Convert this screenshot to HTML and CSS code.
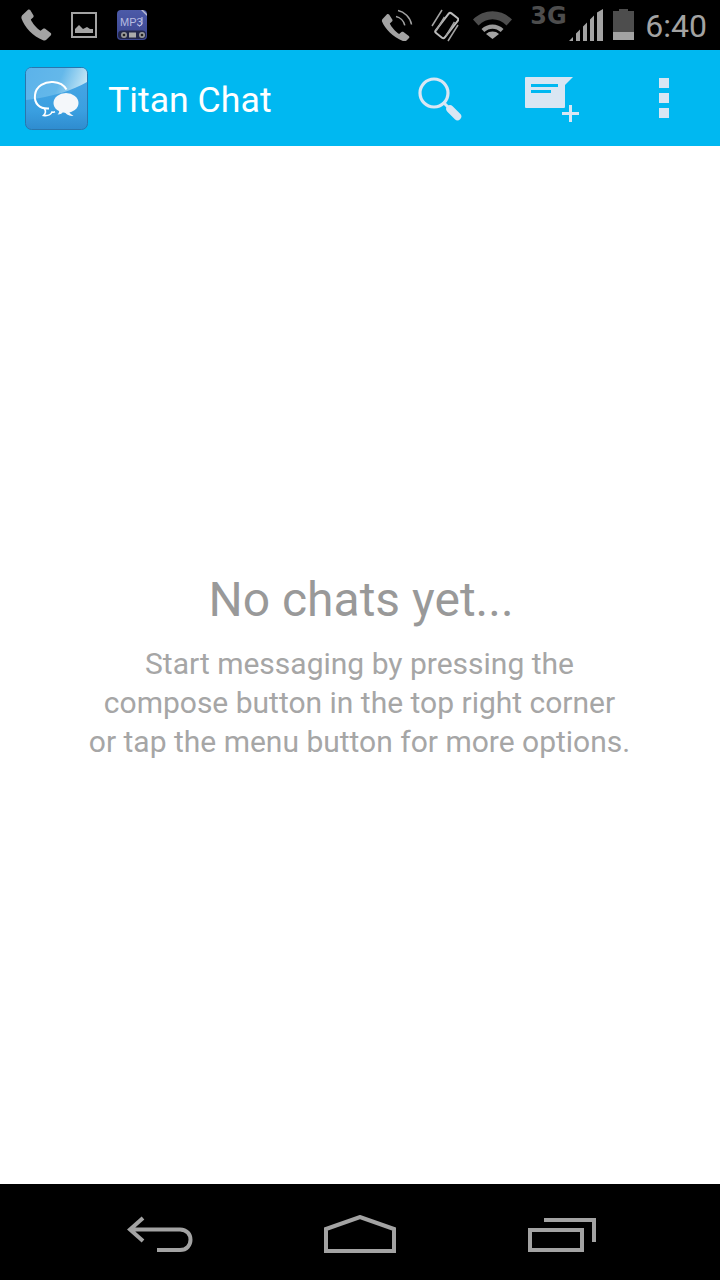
FILE: index.html
```html
<!DOCTYPE html>
<html lang="en">
<head>
<meta charset="utf-8">
<title>Titan Chat</title>
<link rel="stylesheet" href="styles.css">
</head>
<body>
<div class="screen">
  <header class="status">
    <div class="status-left">
      <svg class="ic-phone" viewBox="0 0 32 32"><path class="s-gray" d="M3 5.500 8 .8c.8-.6 1.600-.5 2.200.3l3.200 5.200c.4.800.3 1.500-.3 2.100l-2.300 2.200c1.400 3.500 5.800 8.700 9.800 11.200l2.500-2c.7-.5 1.400-.5 2.100 0l5.500 4.300c.7.600.7 1.400.2 2.100l-4.300 4.400c-1 1-2.200 1.200-3.500.7C13 27.500 4.500 18 1.500 9.500 1.100 7.800 1.800 6.500 3 5.500Z"/></svg>
      <svg class="ic-pic" viewBox="0 0 26 26"><rect class="s-line" x="1" y="1" width="24" height="24"/><path class="s-gray" d="M4 21v-4l4-4 4 4 4-2 3 2 3 0v4Z"/></svg>
      <svg class="ic-mp3" viewBox="0 0 30 30">
        <defs><linearGradient id="mp3g" x1="0" y1="0" x2="0" y2="1"><stop offset="0" stop-color="#4c5aa8"/><stop offset="1" stop-color="#3b4690"/></linearGradient></defs>
        <rect width="30" height="30" rx="4" fill="url(#mp3g)"/>
        <path d="M24 0h2l4 4v2Z" fill="#b9bcd0"/>
        <text class="mp3-text" x="3" y="16">MP3</text>
        <path d="M25 7v7l-3 2.500" fill="none" stroke="#c3c8e4" stroke-width="1"/>
        <rect x="1" y="20.500" width="28" height="8.500" rx="4" fill="#23274a"/>
        <circle cx="7" cy="25" r="3" fill="#9a9a9a"/><circle cx="25" cy="25" r="3" fill="#9a9a9a"/>
        <circle cx="7" cy="25" r="1.300" fill="#222"/><circle cx="25" cy="25" r="1.300" fill="#222"/>
        <rect x="12" y="22.500" width="7" height="5" fill="#aaa"/>
      </svg>
    </div>
    <div class="status-right">
      <svg class="ic-callon" viewBox="0 0 32 32">
        <path class="s-gray" d="M2 9.500 6 5.300c.8-.6 1.500-.5 2.100.3l3.200 5c.4.800.3 1.400-.3 2l-2.200 2c1.400 3.200 5.500 8 9.300 10.500l2.400-2c.7-.5 1.400-.5 2 0l5.300 4c.7.600.7 1.300.2 2l-2.400 2.300c-1 1-2.200 1.200-3.500.7C12 28 4 20 1 12.500c-.3-1.100 0-2.200 1-3Z"/>
        <path class="s-arc" d="M15 7.500c4 .8 7.800 4.300 8.800 8.800"/><path class="s-arc" d="M17 1.500c6 1 12.500 7 13.500 14"/>
      </svg>
      <svg class="ic-vib" viewBox="0 0 28 33">
        <rect class="s-line2" x="10" y="4" width="11.500" height="25" rx="2" transform="rotate(38 15.700 16.500)"/>
        <path class="s-arc" d="M1 17 11 1M5 22 13.500 8M17 32l10-16M15 27l8.500-14" />
      </svg>
      <svg class="ic-wifi" viewBox="0 0 39 30">
        <path fill="#4d4d4d" d="M0 10.500C11-.5 28-.5 39 10.500l-5.500 6C25.500 8 13.500 8 5.500 16.500Z"/>
        <path fill="#9a9a9a" d="M8.500 20C14.500 14 24.500 14 30.500 20l-2.800 3C23 18.500 16 18.500 11.300 23Z"/>
        <path class="s-gray" d="M13 25c3.500-3.300 9.500-3.300 13 0l-6.500 5Z"/>
      </svg>
      <div class="net">3G</div>
      <svg class="ic-signal" viewBox="0 0 34 32">
        <path class="s-gray" d="M0 32 4 28V32ZM7 32V24.500L11 20.500V32ZM14 32V17.500L18 13.500V32ZM21 32V10.500L25 6.500V32ZM28 32V3.500L34 0V32Z"/>
      </svg>
      <svg class="ic-batt" viewBox="0 0 21 31">
        <path fill="#4d4d4d" d="M6 0h9v2h6v21H0V2h6Z"/>
        <rect class="s-gray" y="23" width="21" height="8"/>
      </svg>
      <span class="time">6:40</span>
    </div>
  </header>

  <div class="appbar">
    <svg class="logo" viewBox="0 0 63 63">
      <defs>
        <linearGradient id="lg" x1="0" y1="0" x2="0" y2="1"><stop offset="0" stop-color="#4aa8e6"/><stop offset=".7" stop-color="#3a9fe0"/><stop offset="1" stop-color="#2f8ccf"/></linearGradient>
        <linearGradient id="gl" x1="0" y1="0.300" x2="1" y2="0.500"><stop offset="0" stop-color="#5cb3ea"/><stop offset=".55" stop-color="#64b8ea"/><stop offset="1" stop-color="#c9e9f6"/></linearGradient>
      </defs>
      <rect x=".5" y=".5" width="62" height="62" rx="6" fill="url(#lg)" stroke="#2a76ad"/>
      <path d="M1 6a5 5 0 0 1 5-5h51a5 5 0 0 1 5 5v9C48 23 28 30 1 33Z" fill="url(#gl)"/>
      <path d="M24 41.500C14 42 9 36 10 28 11 19 20 14.500 28 15c6 .4 11 3 13.500 7.500" fill="none" stroke="#fff" stroke-width="2"/>
      <path d="M19.500 42c1.500 2 1.500 4-1 6.500 3.500.5 7-.3 8.500-3.500 1 .3 2.200.2 3-.2" fill="none" stroke="#fff" stroke-width="1.600"/>
      <ellipse cx="41" cy="36" rx="12.500" ry="10" fill="#f4f7fa"/>
      <path d="M34 43c.5 1.500 0 3-1.500 4.500 3 0 5-1 6-3.500ZM44 44c.5 2 2 3.500 4.500 5-4 0-7-1-9-4.500Z" fill="#f4f7fa"/>
    </svg>
    <h1 class="title">Titan Chat</h1>
    <div class="actions">
      <div class="action">
        <svg class="ic-search" viewBox="0 0 44 45">
          <circle cx="16" cy="16" r="14" fill="none" stroke="#d9e6f3" stroke-width="3.200"/>
          <path d="M32 32 39.500 39.500" fill="none" stroke="#d9e6f3" stroke-width="7.500" stroke-linecap="round"/>
          <path d="M26 26 32 32" stroke="#d9e6f3" stroke-width="3"/>
        </svg>
      </div>
      <div class="action">
        <svg class="ic-compose" viewBox="0 0 54 45">
          <path fill-rule="evenodd" fill="#d9e6f3" d="M1 0H48L40 8V30a1 1 0 0 1-1 1H1a1 1 0 0 1-1-1V1a1 1 0 0 1 1-1ZM6 7V10H33V7ZM6 13V16H26V13Z"/>
          <path fill="#d9e6f3" d="M44 28h3v7h7v3h-7v7h-3v-7h-7v-3h7Z"/>
        </svg>
      </div>
      <div class="action">
        <div class="dots"><i></i><i></i><i></i></div>
      </div>
    </div>
  </div>

  <main class="empty">
    <h2 class="empty-title">No chats yet...</h2>
    <p class="empty-text">Start messaging by pressing the<br>compose button in the top right corner<br>or tap the menu button for more options.</p>
  </main>

  <nav class="navbar">
    <div class="navbtn">
      <svg class="ic-back" viewBox="0 0 66 36"><path class="n-line" d="M16 2 3 13.500 16 25M3 13.500H53c14 0 14 20.500 0 20.500H30"/></svg>
    </div>
    <div class="navbtn">
      <svg class="ic-home" viewBox="0 0 72 38"><path class="n-line" d="M2 36V14L36 2 70 14V36Z"/></svg>
    </div>
    <div class="navbtn">
      <svg class="ic-recent" viewBox="0 0 68 34"><rect class="n-line" x="2" y="12" width="52" height="20"/><path class="n-line" d="M16 2H66V24"/></svg>
    </div>
  </nav>
</div>
</body>
</html>
```

FILE: styles.css
```css
* { box-sizing: border-box; }
html, body { margin: 0; padding: 0; }
body { font-family: Roboto, "Noto Sans", sans-serif; background: #fff; }
.screen { width: 720px; height: 1280px; display: flex; flex-direction: column; overflow: hidden; }

.status { height: 50px; flex: none; background: #000; display: flex; justify-content: space-between; }
.status svg { display: block; flex: none; }
.status-left { display: flex; align-items: center; padding-left: 20px; }
.status-right { display: flex; align-items: flex-start; padding-top: 9px; padding-right: 13px; }
.s-gray { fill: #a3a3a3; }
.s-line { fill: none; stroke: #a3a3a3; stroke-width: 2; }
.s-line2 { fill: none; stroke: #bbb; stroke-width: 2; }
.s-arc { fill: none; stroke: #a3a3a3; stroke-width: 1.500; }
.mp3-text { font-family: "Liberation Sans", sans-serif; font-size: 11px; fill: #b8bde0; }
.ic-phone { width: 32px; height: 32px; }
.ic-pic { width: 26px; height: 26px; margin-left: 19px; }
.ic-mp3 { width: 30px; height: 30px; margin-left: 20px; }
.ic-callon { width: 32px; height: 32px; }
.ic-vib { width: 28px; height: 33px; margin-left: 18px; }
.ic-wifi { width: 39px; height: 30px; margin-left: 14px; }
.net { width: 35px; margin-left: 18px; margin-top: -5px; font: 700 24px/24px "DejaVu Sans", sans-serif; color: #4d4d4d; white-space: nowrap; }
.ic-signal { width: 34px; height: 32px; margin-left: 4px; }
.ic-batt { width: 21px; height: 31px; margin-left: 10px; }
.time { margin-left: 11px; font-size: 32px; line-height: 34px; color: #a3a3a3; }

.appbar { height: 96px; flex: none; background: #00b8f1; display: flex; align-items: center; padding-left: 25px; }
.logo { width: 63px; height: 63px; display: block; flex: none; }
.title { margin: 4px 0 0 20px; font-size: 35.700px; font-weight: 400; color: #fff; white-space: nowrap; }
.actions { margin-left: auto; display: flex; }
.action { width: 112px; height: 96px; display: flex; align-items: center; justify-content: center; }
.ic-search { width: 44px; height: 45px; display: block; margin-top: 2px; }
.ic-compose { width: 54px; height: 45px; display: block; margin-top: 3px; }
.dots { display: flex; flex-direction: column; gap: 5px; }
.dots i { display: block; width: 10px; height: 10px; background: #d9e6f3; }

.empty { flex: 1; display: flex; flex-direction: column; align-items: center; padding-top: 424px; text-align: center; }
.empty-title { margin: 0 0 0 2px; font-size: 48px; line-height: 60px; font-weight: 400; color: #999; }
.empty-text { margin: 14px 0 0 -1px; font-size: 30px; line-height: 39px; color: #a6a6a6; }

.navbar { height: 96px; flex: none; background: #000; display: grid; grid-template-columns: repeat(3, 200px); padding: 3px 60px 0; }
.navbtn { display: flex; align-items: center; justify-content: center; }
.n-line { fill: none; stroke: #a3a3a3; stroke-width: 4; }
.ic-back { width: 66px; height: 36px; display: block; }
.ic-home { width: 72px; height: 38px; display: block; }
.ic-recent { width: 68px; height: 34px; display: block; margin: 3px 0 0 4px; }
```
